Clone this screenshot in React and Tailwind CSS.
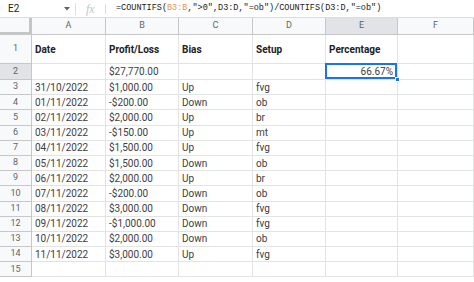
import React from 'react';

const rows = [
  ['31/10/2022', '$1,000.00', 'Up', 'fvg'],
  ['01/11/2022', '-$200.00', 'Down', 'ob'],
  ['02/11/2022', '$2,000.00', 'Up', 'br'],
  ['03/11/2022', '-$150.00', 'Up', 'mt'],
  ['04/11/2022', '$1,500.00', 'Up', 'fvg'],
  ['05/11/2022', '$1,500.00', 'Down', 'ob'],
  ['06/11/2022', '$2,000.00', 'Up', 'br'],
  ['07/11/2022', '-$200.00', 'Down', 'ob'],
  ['08/11/2022', '$3,000.00', 'Down', 'fvg'],
  ['09/11/2022', '-$1,000.00', 'Down', 'fvg'],
  ['10/11/2022', '$2,000.00', 'Down', 'ob'],
  ['11/11/2022', '$3,000.00', 'Up', 'fvg'],
  ['', '', '', ''],
];

const cols = ['A', 'B', 'C', 'D', 'E', 'F'];

function RowHead({ n, active }) {
  return (
    <div
      className={`flex items-center justify-center border-r border-b border-[#c7c7c7] text-[9px] text-[#5f6368] ${
        active ? 'bg-[#e1e3e6]' : 'bg-[#f8f9fa]'
      }`}
    >
      {n}
    </div>
  );
}

function Cell({ children, bold }) {
  return (
    <div
      className={`flex items-center overflow-hidden whitespace-nowrap border-r border-b border-[#e2e3e3] pl-[3px] text-[10px] text-[#3c4043] ${
        bold ? 'font-bold text-[#202124]' : ''
      }`}
    >
      {children}
    </div>
  );
}

export default function App() {
  return (
    <div className="w-[474px] h-[282px] overflow-hidden bg-white" style={{ fontFamily: 'Roboto, "Liberation Sans", sans-serif' }}>
      {/* formula bar */}
      <div className="flex h-[18px] items-center border-b border-[#dadce0] text-[#202124]">
        <div className="w-[60px] pl-[8px] text-[10px]">E2</div>
        <svg width="6" height="4" viewBox="0 0 6 4" className="ml-[4px]">
          <path d="M0 0h6L3 3.5z" fill="#5f6368" />
        </svg>
        <div className="ml-[5px] h-[12px] w-px bg-[#e0e0e0]" />
        <div
          className="ml-[10px] w-[19px] text-[12px] italic text-[#c4c6c9]"
          style={{ fontFamily: '"Liberation Serif", serif' }}
        >
          fx
        </div>
        <div className="h-[10px] w-px bg-[#dadce0]" />
        <div className="ml-[10px] text-[8.5px] text-[#202124]" style={{ fontFamily: '"Liberation Mono", monospace' }}>
          =COUNTIFS(<span className="text-[#e8964f]">B3:B</span>,"&gt;0",D3:D,"=ob")/COUNTIFS(D3:D,"=ob")
        </div>
      </div>

      <div className="grid grid-cols-[32px_74px_73px_74px_73px_72px_1fr] grid-rows-[17px_29px_16px_repeat(13,15.2px)]">
        {/* corner */}
        <div className="border-r-[3px] border-b-[3px] border-[#c4c7c5] bg-[#f8f9fa]" />
        {cols.map((c) => (
          <div
            key={c}
            className={`flex items-center justify-center border-r border-b border-[#c7c7c7] text-[9px] text-[#5f6368] ${
              c === 'E' ? 'bg-[#e1e3e6]' : 'bg-[#f8f9fa]'
            }`}
          >
            {c}
          </div>
        ))}

        <RowHead n={1} />
        <Cell bold>Date</Cell>
        <Cell bold>Profit/Loss</Cell>
        <Cell bold>Bias</Cell>
        <Cell bold>Setup</Cell>
        <Cell bold>Percentage</Cell>
        <Cell />

        <RowHead n={2} active />
        <Cell />
        <Cell>$27,770.00</Cell>
        <Cell />
        <Cell />
        <div className="relative border-r border-b border-[#e2e3e3]">
          <div className="absolute -left-px -top-px right-0 bottom-0 flex items-center justify-end border-2 border-[#1a73e8] pr-[2px] text-[10px] text-[#3c4043]">
            66.67%
          </div>
          <div className="absolute -right-[3px] -bottom-[3px] h-[5px] w-[5px] border border-white bg-[#1a73e8]" />
        </div>
        <Cell />

        {rows.map((r, i) => (
          <React.Fragment key={i}>
            <RowHead n={i + 3} />
            <Cell>{r[0]}</Cell>
            <Cell>{r[1]}</Cell>
            <Cell>{r[2]}</Cell>
            <Cell>{r[3]}</Cell>
            <Cell />
            <Cell />
          </React.Fragment>
        ))}
      </div>
    </div>
  );
}
